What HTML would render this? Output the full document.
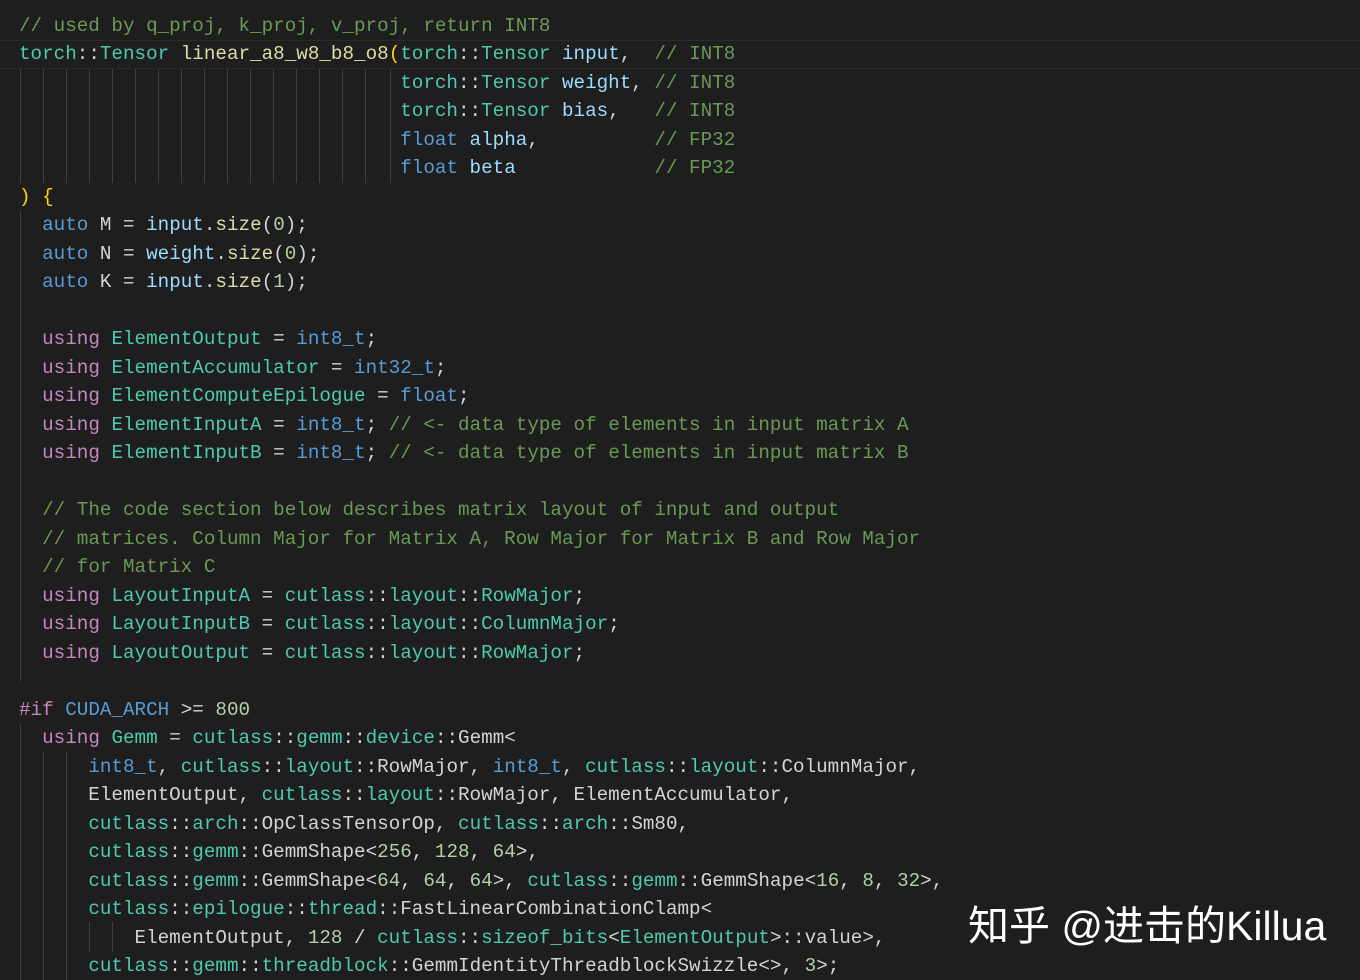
<!DOCTYPE html>
<html><head><meta charset="utf-8"><style>
html,body{margin:0;padding:0;background:#1e1e1e;width:1360px;height:980px;overflow:hidden;position:relative}
pre{position:absolute;left:19px;top:12px;margin:0;font-family:"Liberation Mono",monospace;font-size:19.25px;line-height:28.48px;color:#d4d4d4;white-space:pre}
.c{color:#6a9955}.t{color:#4ec9b0}.v{color:#9cdcfe}.k{color:#569cd6}.p{color:#c586c0}.n{color:#b5cea8}.f{color:#dcdcaa}.y{color:#ffd700}
.g{position:absolute;width:1px;background:#404040}
.hl{position:absolute;left:0;top:40px;width:1360px;height:27px;border-top:1px solid #2a2a2a;border-bottom:1px solid #2a2a2a}
.wm{position:absolute;left:968px;top:892px;font-family:"Liberation Sans","Noto Sans CJK SC",sans-serif;font-size:41px;color:#fff;white-space:nowrap}
</style></head><body>
<div class="hl"></div>
<div class="g" style="left:20px;top:69px;height:114px"></div>
<div class="g" style="left:43px;top:69px;height:114px"></div>
<div class="g" style="left:66px;top:69px;height:114px"></div>
<div class="g" style="left:89px;top:69px;height:114px"></div>
<div class="g" style="left:112px;top:69px;height:114px"></div>
<div class="g" style="left:135px;top:69px;height:114px"></div>
<div class="g" style="left:158px;top:69px;height:114px"></div>
<div class="g" style="left:181px;top:69px;height:114px"></div>
<div class="g" style="left:204px;top:69px;height:114px"></div>
<div class="g" style="left:227px;top:69px;height:114px"></div>
<div class="g" style="left:250px;top:69px;height:114px"></div>
<div class="g" style="left:273px;top:69px;height:114px"></div>
<div class="g" style="left:296px;top:69px;height:114px"></div>
<div class="g" style="left:319px;top:69px;height:114px"></div>
<div class="g" style="left:342px;top:69px;height:114px"></div>
<div class="g" style="left:365px;top:69px;height:114px"></div>
<div class="g" style="left:390px;top:69px;height:114px"></div>
<div class="g" style="left:20px;top:211px;height:470px"></div>
<div class="g" style="left:20px;top:724px;height:256px"></div>
<div class="g" style="left:43px;top:752px;height:228px"></div>
<div class="g" style="left:66px;top:752px;height:228px"></div>
<div class="g" style="left:89px;top:922px;height:30px"></div>
<div class="g" style="left:112px;top:922px;height:30px"></div>
<pre><span class="c">// used by q_proj, k_proj, v_proj, return INT8</span>
<span class="t">torch</span>::<span class="t">Tensor</span> <span class="f">linear_a8_w8_b8_o8</span><span class="y">(</span><span class="t">torch</span>::<span class="t">Tensor</span> <span class="v">input</span>,  <span class="c">// INT8</span>
                                 <span class="t">torch</span>::<span class="t">Tensor</span> <span class="v">weight</span>, <span class="c">// INT8</span>
                                 <span class="t">torch</span>::<span class="t">Tensor</span> <span class="v">bias</span>,   <span class="c">// INT8</span>
                                 <span class="k">float</span> <span class="v">alpha</span>,          <span class="c">// FP32</span>
                                 <span class="k">float</span> <span class="v">beta</span>            <span class="c">// FP32</span>
<span class="y">) {</span>
  <span class="k">auto</span> M = <span class="v">input</span>.<span class="f">size</span>(<span class="n">0</span>);
  <span class="k">auto</span> N = <span class="v">weight</span>.<span class="f">size</span>(<span class="n">0</span>);
  <span class="k">auto</span> K = <span class="v">input</span>.<span class="f">size</span>(<span class="n">1</span>);

  <span class="p">using</span> <span class="t">ElementOutput</span> = <span class="k">int8_t</span>;
  <span class="p">using</span> <span class="t">ElementAccumulator</span> = <span class="k">int32_t</span>;
  <span class="p">using</span> <span class="t">ElementComputeEpilogue</span> = <span class="k">float</span>;
  <span class="p">using</span> <span class="t">ElementInputA</span> = <span class="k">int8_t</span>; <span class="c">// &lt;- data type of elements in input matrix A</span>
  <span class="p">using</span> <span class="t">ElementInputB</span> = <span class="k">int8_t</span>; <span class="c">// &lt;- data type of elements in input matrix B</span>

  <span class="c">// The code section below describes matrix layout of input and output</span>
  <span class="c">// matrices. Column Major for Matrix A, Row Major for Matrix B and Row Major</span>
  <span class="c">// for Matrix C</span>
  <span class="p">using</span> <span class="t">LayoutInputA</span> = <span class="t">cutlass</span>::<span class="t">layout</span>::<span class="t">RowMajor</span>;
  <span class="p">using</span> <span class="t">LayoutInputB</span> = <span class="t">cutlass</span>::<span class="t">layout</span>::<span class="t">ColumnMajor</span>;
  <span class="p">using</span> <span class="t">LayoutOutput</span> = <span class="t">cutlass</span>::<span class="t">layout</span>::<span class="t">RowMajor</span>;

<span class="p">#if</span> <span class="k">CUDA_ARCH</span> &gt;= <span class="n">800</span>
  <span class="p">using</span> <span class="t">Gemm</span> = <span class="t">cutlass</span>::<span class="t">gemm</span>::<span class="t">device</span>::Gemm&lt;
      <span class="k">int8_t</span>, <span class="t">cutlass</span>::<span class="t">layout</span>::RowMajor, <span class="k">int8_t</span>, <span class="t">cutlass</span>::<span class="t">layout</span>::ColumnMajor,
      ElementOutput, <span class="t">cutlass</span>::<span class="t">layout</span>::RowMajor, ElementAccumulator,
      <span class="t">cutlass</span>::<span class="t">arch</span>::OpClassTensorOp, <span class="t">cutlass</span>::<span class="t">arch</span>::Sm80,
      <span class="t">cutlass</span>::<span class="t">gemm</span>::GemmShape&lt;<span class="n">256</span>, <span class="n">128</span>, <span class="n">64</span>&gt;,
      <span class="t">cutlass</span>::<span class="t">gemm</span>::GemmShape&lt;<span class="n">64</span>, <span class="n">64</span>, <span class="n">64</span>&gt;, <span class="t">cutlass</span>::<span class="t">gemm</span>::GemmShape&lt;<span class="n">16</span>, <span class="n">8</span>, <span class="n">32</span>&gt;,
      <span class="t">cutlass</span>::<span class="t">epilogue</span>::<span class="t">thread</span>::FastLinearCombinationClamp&lt;
          ElementOutput, <span class="n">128</span> / <span class="t">cutlass</span>::<span class="t">sizeof_bits</span>&lt;<span class="t">ElementOutput</span>&gt;::value&gt;,
      <span class="t">cutlass</span>::<span class="t">gemm</span>::<span class="t">threadblock</span>::GemmIdentityThreadblockSwizzle&lt;&gt;, <span class="n">3</span>&gt;;</pre>
<div class="wm">知乎 @进击的Killua</div>
</body></html>
